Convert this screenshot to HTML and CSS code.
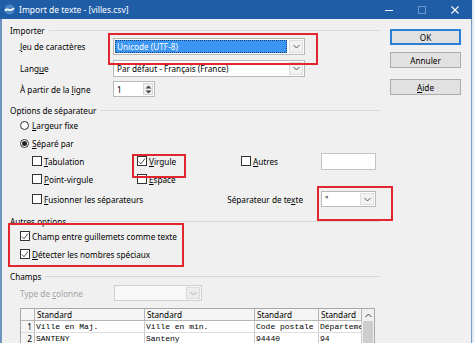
FILE: index.html
```html
<!DOCTYPE html>
<html lang="fr">
<head>
    <meta charset="UTF-8">
    <title>Import de texte</title>
    <link rel="stylesheet" href="styles.css">
</head>
<body>

<div class="window">
    <div class="titlebar">
        <svg class="app-icon" width="11" height="11" viewBox="0 0 11 11">
            <circle cx="5.5" cy="5.5" r="5" fill="#4a86c8"/>
            <path d="M1.5 6.2 C3 3.6 5 8.4 9.5 4.6" stroke="#fff" stroke-width="1.8" fill="none" stroke-linecap="round"/>
        </svg>
        <span class="title">Import de texte - [villes.csv]</span>
        <div class="controls">
            <span class="ctl"><svg width="10" height="10" viewBox="0 0 10 10"><path d="M1 5.5h8" stroke="#fff" stroke-width="1"/></svg></span>
            <span class="ctl"><svg width="10" height="10" viewBox="0 0 10 10"><rect x="1.5" y="1.5" width="7" height="7" stroke="#6f97c9" fill="none"/></svg></span>
            <span class="ctl"><svg width="10" height="10" viewBox="0 0 10 10"><path d="M1.5 1.5l7 7M8.5 1.5l-7 7" stroke="#fff" stroke-width="1.1"/></svg></span>
        </div>
    </div>

    <div class="content">
        <div class="main">
            <div class="legend">Importer</div>

            <div class="field row-charset">
                <span class="lbl"><u>J</u>eu de caractères</span>
                <span class="combo combo-wide selected mark mark-charset">
                    <span class="combo-text"><span class="focus">Unicode (UTF-8)</span></span>
                    <span class="combo-btn"><svg width="7" height="5" viewBox="0 0 7 5"><path d="M0.5 1l3 3 3-3" stroke="#555" fill="none"/></svg></span>
                </span>
            </div>

            <div class="field row-lang">
                <span class="lbl">Lang<u>u</u>e</span>
                <span class="combo combo-wide">
                    <span class="combo-text">Par défaut - Français (France)</span>
                    <span class="combo-btn"><svg width="7" height="5" viewBox="0 0 7 5"><path d="M0.5 1l3 3 3-3" stroke="#555" fill="none"/></svg></span>
                </span>
            </div>

            <div class="field row-line">
                <span class="lbl">À partir de la <u>l</u>igne</span>
                <span class="spin">
                    <span class="spin-text">1</span>
                    <span class="spin-btns">
                        <svg width="7" height="4" viewBox="0 0 7 4"><path d="M0.5 3.5h6l-3-3z" fill="#444"/></svg>
                        <svg width="7" height="4" viewBox="0 0 7 4"><path d="M0.5 0.5h6l-3 3z" fill="#444"/></svg>
                    </span>
                </span>
            </div>

            <div class="legend legend-sep">Options de séparateur</div>

            <div class="radio">
                <span class="dot"></span><span><u>L</u>argeur fixe</span>
            </div>
            <div class="radio">
                <span class="dot on"></span><span><u>S</u>éparé par</span>
            </div>

            <div class="check-row">
                <span class="cell cell-1"><span class="box"></span><span><u>T</u>abulation</span></span>
                <span class="cell cell-2 mark mark-comma"><span class="box"><svg width="9" height="9" viewBox="0 0 9 9"><path d="M1 4.6l2.4 2.4 4.6-6" stroke="#222" stroke-width="0.9" fill="none"/></svg></span><span><u>V</u>irgule</span></span>
                <span class="cell cell-3"><span class="box"></span><span><u>A</u>utres</span></span>
                <span class="textbox"></span>
            </div>
            <div class="check-row">
                <span class="cell cell-1"><span class="box"></span><span><u>P</u>oint-virgule</span></span>
                <span class="cell cell-2"><span class="box"></span><span><u>E</u>space</span></span>
            </div>
            <div class="check-row check-row-last">
                <span class="cell cell-grow"><span class="box"></span><span><u>F</u>usionner les séparateurs</span></span>
                <span class="quote-lbl">Séparateur de te<u>x</u>te</span>
                <span class="combo combo-quote mark mark-quote">
                    <span class="combo-text">"</span>
                    <span class="combo-btn"><svg width="7" height="5" viewBox="0 0 7 5"><path d="M0.5 1l3 3 3-3" stroke="#555" fill="none"/></svg></span>
                </span>
            </div>

            <div class="legend legend-other">Autres options</div>

            <div class="other mark mark-other">
                <div class="check-line">
                    <span class="box"><svg width="9" height="9" viewBox="0 0 9 9"><path d="M1 4.6l2.4 2.4 4.6-6" stroke="#222" stroke-width="0.9" fill="none"/></svg></span>
                    <span>Champ entre guillemets comme texte</span>
                </div>
                <div class="check-line">
                    <span class="box"><svg width="9" height="9" viewBox="0 0 9 9"><path d="M1 4.6l2.4 2.4 4.6-6" stroke="#222" stroke-width="0.9" fill="none"/></svg></span>
                    <span><u>D</u>étecter les nombres spéciaux</span>
                </div>
            </div>

            <div class="legend legend-fields">Champs</div>

            <div class="field row-type">
                <span class="lbl disabled">Type de <u>c</u>olonne</span>
                <span class="combo combo-type">
                    <span class="combo-text"></span>
                    <span class="combo-btn"><svg width="7" height="5" viewBox="0 0 7 5"><path d="M0.5 1l3 3 3-3" stroke="#aaa" fill="none"/></svg></span>
                </span>
            </div>

            <div class="preview">
                <div class="preview-grid">
                    <div class="grid-row head">
                        <span class="num"></span>
                        <span>Standard</span>
                        <span>Standard</span>
                        <span>Standard</span>
                        <span>Standard</span>
                    </div>
                    <div class="grid-row">
                        <span class="num">1</span>
                        <span class="mono">Ville en Maj.</span>
                        <span class="mono">Ville en min.</span>
                        <span class="mono">Code postale</span>
                        <span class="mono">Départeme</span>
                    </div>
                    <div class="grid-row">
                        <span class="num">2</span>
                        <span class="mono">SANTENY</span>
                        <span class="mono">Santeny</span>
                        <span class="mono">94440</span>
                        <span class="mono">94</span>
                    </div>
                </div>
                <div class="vscroll">
                    <span class="vs-up"><svg width="7" height="5" viewBox="0 0 7 5"><path d="M0.5 4l3-3 3 3" stroke="#444" fill="none"/></svg></span>
                    <span class="vs-thumb"></span>
                </div>
            </div>
        </div>

        <div class="side">
            <button class="btn btn-default">OK</button>
            <button class="btn btn-cancel">Annuler</button>
            <button class="btn btn-help"><u>A</u>ide</button>
        </div>
    </div>
</div>

</body>
</html>
```

FILE: styles.css
```css
* {
    box-sizing: border-box;
}
body {
    margin: 0;
    background: #e3e9f0;
    font-family: "Noto Sans", "Open Sans", sans-serif;
    font-size: 8.2px;
    color: #000;
}
u {
    text-decoration-thickness: 1px;
    text-underline-offset: 1px;
}
.window {
    width: 472px;
    height: 343px;
    background: #f0f0f0;
    display: flex;
    flex-direction: column;
    overflow: hidden;
}
.titlebar {
    height: 19px;
    flex-shrink: 0;
    background: #1f5ea6;
    color: #fff;
    display: flex;
    align-items: center;
    padding-left: 4px;
}
.app-icon {
    margin-right: 4px;
}
.title {
    font-size: 8.5px;
}
.controls {
    margin-left: auto;
    margin-right: 1px;
    display: flex;
}
.ctl {
    width: 33px;
    height: 19px;
    display: flex;
    align-items: center;
    justify-content: center;
}
.content {
    flex: 1;
    display: flex;
    border-left: 2px solid #6f93bf;
    border-right: 1px solid #7b9cc4;
}
.main {
    width: 378px;
    padding: 5px 0 0 8px;
    display: flex;
    flex-direction: column;
}
.legend {
    height: 12px;
    display: flex;
    align-items: center;
    white-space: nowrap;
}
.legend::after {
    content: "";
    flex: 1;
    height: 1px;
    margin-left: 4px;
    background: #d9d9d9;
}
.legend-sep {
    margin-top: 6px;
}
.legend-other {
    margin-top: 5px;
}
.legend-fields {
    margin-top: 7px;
}
.field {
    display: flex;
    align-items: center;
    padding-left: 10px;
}
.lbl {
    width: 93px;
    white-space: nowrap;
}
.disabled {
    color: #a3a3a3;
}
.row-charset {
    height: 21px;
}
.row-lang {
    height: 23px;
}
.row-line {
    height: 18px;
}
.row-type {
    height: 22px;
}

/* combo boxes */
.combo {
    height: 17px;
    display: flex;
    background: #fff;
    border: 1px solid #b9b9b9;
}
.combo-wide {
    width: 192px;
}
.combo-text {
    flex: 1;
    display: flex;
    align-items: center;
    padding-left: 3px;
    white-space: nowrap;
    overflow: hidden;
}
.combo-btn {
    width: 14px;
    margin: 1px;
    background: #f2f2f2;
    border: 1px solid #dcdcdc;
    display: flex;
    align-items: center;
    justify-content: center;
}
.selected .combo-text {
    padding: 1px;
}
.focus {
    flex: 1;
    height: 100%;
    display: flex;
    align-items: center;
    padding-left: 2px;
    background: #3b95f2;
    color: #fff;
    outline: 1px dotted #1b3f6a;
    outline-offset: -1px;
}
.combo-quote {
    width: 55px;
    height: 16px;
    margin-left: 18px;
    margin-right: 4px;
}
.combo-type {
    width: 88px;
    height: 16px;
    margin-left: 1px;
    background: #f8f8f8;
    border-color: #cfcfcf;
}
.combo-type .combo-btn {
    background: #ececec;
}

/* spin field */
.spin {
    width: 42px;
    height: 16px;
    display: flex;
    background: #fff;
    border: 1px solid #b9b9b9;
}
.spin-text {
    flex: 1;
    display: flex;
    align-items: center;
    padding-left: 3px;
}
.spin-btns {
    width: 10px;
    margin: 1px;
    display: flex;
    flex-direction: column;
    justify-content: space-around;
    align-items: center;
    background: #f0f0f0;
    border: 1px solid #d6d6d6;
}

/* radio and check boxes */
.radio {
    height: 18px;
    display: flex;
    align-items: center;
    padding-left: 10px;
}
.dot {
    width: 9px;
    height: 9px;
    margin-right: 3px;
    border: 1px solid #333;
    border-radius: 50%;
    background: #fff;
    display: flex;
    align-items: center;
    justify-content: center;
}
.dot.on::after {
    content: "";
    width: 5px;
    height: 5px;
    border-radius: 50%;
    background: #222;
}
.box {
    width: 10px;
    height: 10px;
    margin-right: 2px;
    border: 1px solid #333;
    background: #fff;
    display: inline-flex;
    align-items: center;
    justify-content: center;
    flex-shrink: 0;
}
.check-row {
    height: 18px;
    display: flex;
    align-items: center;
    padding-left: 22px;
}
.check-row-last {
    height: 22px;
}
.cell {
    display: flex;
    align-items: center;
    white-space: nowrap;
}
.cell-1 {
    width: 105px;
}
.cell-2 {
    width: 104px;
}
.cell-3 {
    width: 80px;
}
.cell-grow {
    flex: 1;
}
.textbox {
    width: 55px;
    height: 17px;
    background: #fff;
    border: 1px solid #c4c4c4;
}
.quote-lbl {
    white-space: nowrap;
}
.other {
    display: flex;
    flex-direction: column;
}
.check-line {
    height: 18px;
    display: flex;
    align-items: center;
    padding-left: 10px;
    white-space: nowrap;
}

/* red annotation boxes drawn over the dialog */
.mark {
    position: relative;
}
.mark::after {
    content: "";
    position: absolute;
    border: 2px solid #e2262d;
    pointer-events: none;
}
.mark-charset::after {
    left: -6px;
    top: -6px;
    width: 206px;
    height: 28px;
}
.mark-comma::after {
    left: -5px;
    top: -2px;
    width: 50px;
    height: 20px;
}
.mark-quote::after {
    left: -5px;
    top: -6px;
    width: 72px;
    height: 31px;
}
.mark-other::after {
    left: -2px;
    top: -4px;
    width: 172px;
    height: 40px;
}

/* preview table */
.preview {
    width: 355px;
    height: 40px;
    margin: 4px 0 0 10px;
    display: flex;
    background: #fff;
    border: 1px solid #a8a8a8;
    border-bottom: none;
}
.preview-grid {
    flex: 1;
}
.grid-row {
    height: 12px;
    display: grid;
    grid-template-columns: 14px 110px 110px 64px 43px;
}
.grid-row span {
    padding-left: 2px;
    line-height: 11px;
    white-space: nowrap;
    overflow: hidden;
    border-right: 1px solid #c9c9c9;
    border-bottom: 1px solid #dedede;
}
.grid-row.head span {
    background: #f5f5f5;
    border-right-color: #b5b5b5;
    border-bottom-color: #b5b5b5;
}
.grid-row span.num {
    background: #f5f5f5;
    text-align: right;
    padding: 0 2px 0 0;
    border-right-color: #b5b5b5;
}
.grid-row span.mono {
    font-family: "Liberation Mono", "DejaVu Sans Mono", monospace;
    font-size: 8px;
    padding-left: 1px;
}
.vscroll {
    width: 12px;
    display: flex;
    flex-direction: column;
    background: #f0f0f0;
}
.vs-up {
    height: 12px;
    display: flex;
    align-items: center;
    justify-content: center;
}
.vs-thumb {
    flex: 1;
    margin: 0 1px;
    background: #cdcdcd;
}

/* dialog buttons */
.side {
    flex: 1;
    padding: 10px 0 0 10px;
    display: flex;
    flex-direction: column;
    align-items: flex-start;
}
.btn {
    width: 71px;
    height: 16px;
    padding: 0;
    font-family: inherit;
    font-size: 8.2px;
    color: #000;
    background: #e1e1e1;
    border: 1px solid #adadad;
}
.btn-default {
    border-color: #2a7fd4;
    box-shadow: inset 0 0 0 1px #2a7fd4;
}
.btn-cancel {
    margin-top: 7px;
}
.btn-help {
    margin-top: 11px;
}
```
